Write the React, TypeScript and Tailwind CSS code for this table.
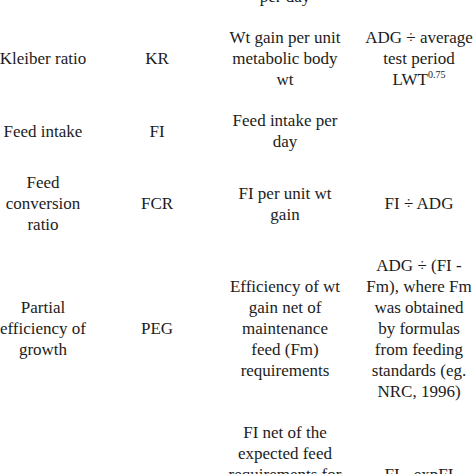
import React from 'react';

type Cell = React.ReactNode[];

// each row: [name, abbreviation, description, formula]; every cell is a list of lines
const rows: Cell[][] = [
  [[], [], ['Average wt gain', 'per day'], []],
  [
    ['Kleiber ratio'],
    ['KR'],
    ['Wt gain per unit', 'metabolic body', 'wt'],
    [
      'ADG ÷ average',
      'test period',
      <span key="lwt">
        LWT<sup className="text-[10px] relative -top-[7px] align-baseline">0.75</sup>
      </span>,
    ],
  ],
  [['Feed intake'], ['FI'], ['Feed intake per', 'day'], []],
  [['Feed', 'conversion', 'ratio'], ['FCR'], ['FI per unit wt', 'gain'], ['FI ÷ ADG']],
  [
    ['Partial', 'efficiency of', 'growth'],
    ['PEG'],
    ['Efficiency of wt', 'gain net of', 'maintenance', 'feed (Fm)', 'requirements'],
    [
      'ADG ÷ (FI -',
      'Fm), where Fm',
      'was obtained',
      'by formulas',
      'from feeding',
      'standards (eg.',
      'NRC, 1996)',
    ],
  ],
  [
    [],
    [],
    ['FI net of the', 'expected feed', 'requirements for', 'maintenance', 'and growth'],
    ['FI - expFI'],
  ],
];

function TableCell({ lines }: { lines: Cell }) {
  return (
    <div className="flex items-center justify-center py-[10px] text-center">
      <div className="flex flex-col items-center whitespace-nowrap">
        {lines.map((line, i) => (
          <div key={i}>{line}</div>
        ))}
      </div>
    </div>
  );
}

export default function App() {
  return (
    <div className="w-[474px] h-[474px] overflow-hidden bg-white">
      <div className="grid grid-cols-[100px_128px_128px_140px] w-[496px] ml-[-7px] mt-[-45px] font-['Liberation_Serif',serif] text-[17px] leading-[21px] text-[#1c1c1c]">
        {rows.map((row, r) =>
          row.map((cell, c) => <TableCell key={`${r}-${c}`} lines={cell} />)
        )}
      </div>
    </div>
  );
}
